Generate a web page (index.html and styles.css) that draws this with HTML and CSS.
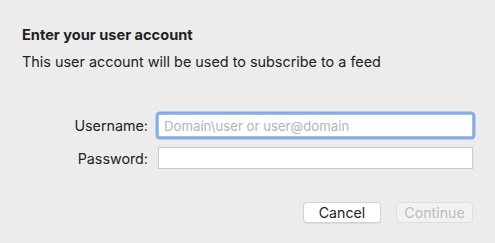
FILE: index.html
```html
<!DOCTYPE html>
<html lang="en">
<head>
    <meta charset="UTF-8">
    <meta name="viewport" content="width=device-width, initial-scale=1.0">
    <link rel="stylesheet" href="styles.css">
</head>
<body>
	<div class="dialog">
		<h1 class="title">Enter your user account</h1>
		<p class="desc">This user account will be used to subscribe to a feed</p>

		<div class="form">
			<label class="label" for="username">Username:</label>
			<input type="text" id="username" class="field focus" placeholder="Domain\user or user@domain">
			<label class="label" for="password">Password:</label>
			<input type="password" id="password" class="field">
		</div>

		<div class="buttons">
			<button class="btn">Cancel</button>
			<button class="btn disabled" disabled>Continue</button>
		</div>
	</div>
</body>
</html>
```

FILE: styles.css
```css
/* dialog */
html, body {margin: 0; padding: 0; background: #ececec; }
.dialog {width: 495px; height: 243px; box-sizing: border-box; padding: 26px 22px 0; font-family: Inter, "Liberation Sans", sans-serif; color: #222; }
.title {margin: 0; font-size: 14.6px; line-height: 18px; font-weight: 700; }
.desc {margin: 9px 0 0; font-size: 14.4px; line-height: 18px; font-weight: 400; }

/* form */
.form {display: grid; grid-template-columns: 126px 1fr; column-gap: 10px; row-gap: 10px; align-items: center; margin-top: 43px; }
.label {text-align: right; font-size: 14.3px; color: #222; }
.field {height: 22px; box-sizing: border-box; margin: 0; padding: 0 5px; border: 1px solid #c8c8c8; background: #fff; font-family: inherit; font-size: 13.2px; color: #222; outline: 0; }
.field::placeholder {color: #b4b4b4; }
.field.focus {height: 23px; border-color: #a7bde0; box-shadow: 0 0 0 2.5px #85abe8; border-radius: 2px; }

/* buttons */
.buttons {display: flex; justify-content: flex-end; gap: 15px; margin-top: 33px; }
.btn {width: 78px; height: 21px; padding: 0; border: 1px solid #d2d2d2; border-radius: 4px; background: #fff; font-family: inherit; font-size: 14.2px; color: #222; box-shadow: 0 1px 1px rgba(0,0,0,0.08); }
.btn.disabled {width: 77px; background: #f2f2f2; color: #bdbdbd; border-color: #dedede; box-shadow: none; }
```
